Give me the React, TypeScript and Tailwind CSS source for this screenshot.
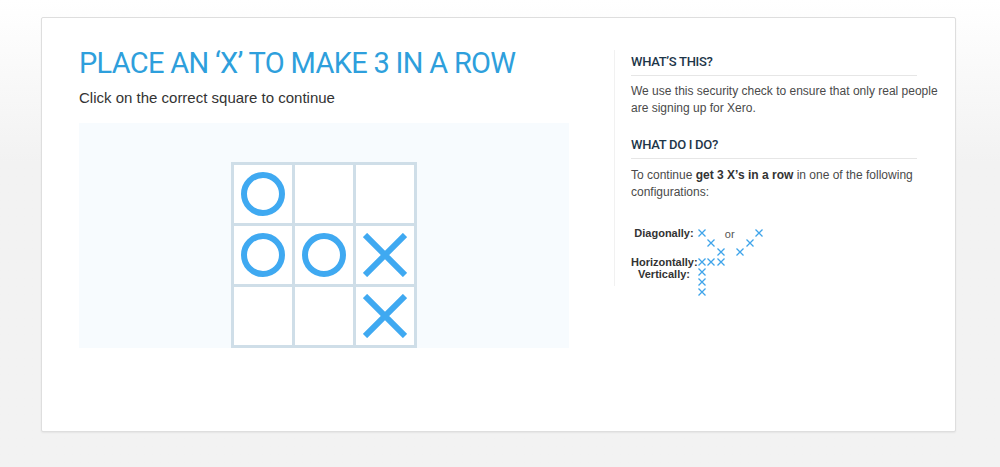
import React from 'react'

function Ring(): React.JSX.Element {
  return (
    <svg width="44" height="44" viewBox="0 0 44 44">
      <circle cx="22" cy="22" r="19" fill="none" stroke="#3fa9f1" strokeWidth="6" />
    </svg>
  )
}

function Cross(): React.JSX.Element {
  return (
    <svg width="44" height="44" viewBox="0 0 44 44">
      <path d="M2 2L42 42M42 2L2 42" stroke="#3fa9f1" strokeWidth="6" />
    </svg>
  )
}

function MiniX(): React.JSX.Element {
  return (
    <svg width="8" height="8" viewBox="0 0 8 8" className="block">
      <path d="M0.5 0.5L7.5 7.5M7.5 0.5L0.5 7.5" stroke="#3ea4ea" strokeWidth="1.3" />
    </svg>
  )
}

const board = [
  ['o', '', ''],
  ['o', 'o', 'x'],
  ['', '', 'x'],
]

// [row, col] of the small x marks in the legend grid (cols after the label column)
const minis: [number, number][] = [
  [0, 0], [1, 1], [2, 2],
  [0, 6], [1, 5], [2, 4],
  [3, 0], [3, 1], [3, 2],
  [4, 0], [5, 0], [6, 0],
]

export default function App(): React.JSX.Element {
  return (
    <div className="min-h-[467px] bg-gradient-to-b from-white to-[#f2f2f2] to-[35%] pt-[17px] font-['Liberation_Sans',Arial,sans-serif]">
      <div className="ml-[41px] w-[915px] h-[415px] rounded-[2px] border border-[#dedede] bg-white shadow-[0_1px_2px_rgba(0,0,0,0.06)] flex">
        {/* left column */}
        <div className="pl-[37px] pt-[28px] w-[528px]">
          <h1 className="font-['Roboto',sans-serif] text-[29px] leading-[34px] text-[#2e9fdc] tracking-[-0.7px] whitespace-nowrap">
            PLACE AN ‘X’ TO MAKE 3 IN A ROW
          </h1>
          <p className="mt-[8px] text-[15px] leading-[19px] text-[#333]">Click on the correct square to continue</p>
          <div className="mt-[16px] w-[490px] h-[225px] bg-[#f7fbfe] flex justify-center items-end">
            <div className="grid grid-cols-[58px_58px_58px] gap-[3px] p-[3px] bg-[#cfdee8]">
              {board.flat().map((c, i) => (
                <div key={i} className="h-[58px] bg-white flex items-center justify-center">
                  {c === 'o' && <Ring />}
                  {c === 'x' && <Cross />}
                </div>
              ))}
            </div>
          </div>
        </div>

        {/* right column */}
        <div className="ml-[44px] mt-[32px] h-[236px] border-l border-[#f1f1f1] pl-[16px] w-[310px]">
          <h2 className="font-['Roboto',sans-serif] font-medium text-[13px] leading-[15px] tracking-[-0.3px] text-[#1d3649] pt-[4px]">WHAT’S THIS?</h2>
          <div className="mt-[6px] w-[286px] h-px bg-[#e6e6e6]" />
          <p className="mt-[7px] text-[12px] leading-[17px] text-[#4a4a4a] w-[310px]">
            We use this security check to ensure that only real people<br />are signing up for Xero.
          </p>
          <h2 className="mt-[20px] font-['Roboto',sans-serif] font-medium text-[13px] leading-[15px] tracking-[-0.3px] text-[#1d3649]">WHAT DO I DO?</h2>
          <div className="mt-[6px] w-[286px] h-px bg-[#e6e6e6]" />
          <p className="mt-[8px] text-[12px] leading-[17px] text-[#4a4a4a] w-[310px]">
            To continue <b className="text-[#333]">get 3 X’s in a row</b> in one of the following<br />configurations:
          </p>

          <div className="mt-[27px] grid grid-cols-[66px_repeat(7,9.6px)] grid-rows-[repeat(7,9.8px)] text-[11px] font-bold text-[#333] leading-none">
            <div className="row-start-1 col-start-1 text-center whitespace-nowrap">Diagonally:</div>
            <div className="row-start-4 col-start-1 text-center whitespace-nowrap">Horizontally:</div>
            <div className="row-start-5 col-start-1 text-center whitespace-nowrap pt-[2px]">Vertically:</div>
            <div className="row-start-1 col-start-5 font-normal text-[#555] text-[11px] pt-[1px] -ml-[1px]">or</div>
            {minis.map(([r, c], i) => (
              <div
                key={i}
                className="flex items-center justify-center"
                style={{ gridRowStart: r + 1, gridColumnStart: c + 2 }}
              >
                <MiniX />
              </div>
            ))}
          </div>
        </div>
      </div>
    </div>
  )
}
